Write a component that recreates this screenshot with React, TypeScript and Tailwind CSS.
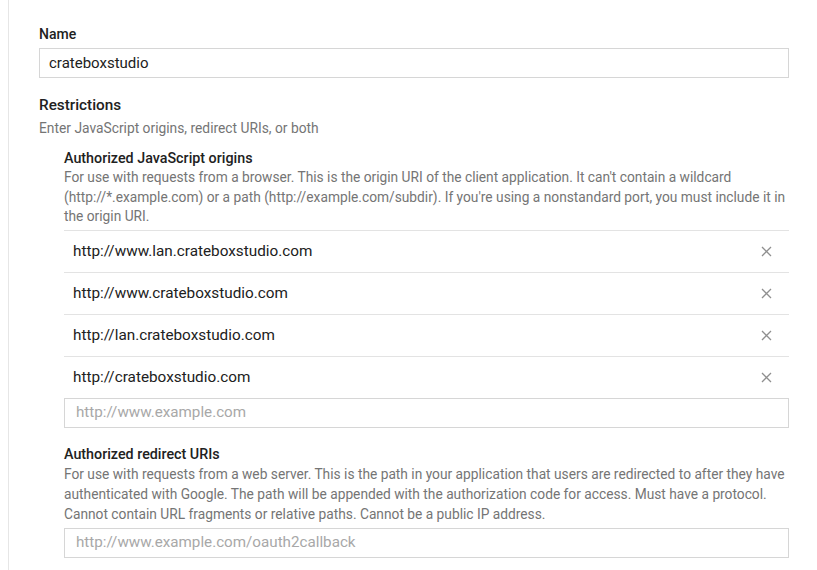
import React from "react";

const origins = [
  "http://www.lan.crateboxstudio.com",
  "http://www.crateboxstudio.com",
  "http://lan.crateboxstudio.com",
  "http://crateboxstudio.com",
];

function XIcon() {
  return (
    <svg width="11" height="11" viewBox="0 0 11 11" fill="none">
      <path d="M1 1 L10 10 M10 1 L1 10" stroke="#8f8f8f" strokeWidth="1.3" />
    </svg>
  );
}

export default function App() {
  return (
    <div
      className="w-[817px] h-[570px] bg-white overflow-hidden"
      style={{ fontFamily: "Roboto, 'Noto Sans', sans-serif" }}
    >
      <div className="ml-[8px] h-full border-l border-[#e6e6e6] pl-[30px] pr-[28px] pt-[24px]">
        <div className="text-[14px] leading-[20px] font-medium text-[#212121]">Name</div>
        <div className="mt-[4px] h-[30px] border border-[#d6d6d6] pl-[9px] flex items-center text-[15px] text-[#212121]">
          crateboxstudio
        </div>

        <div className="mt-[17px] text-[15.3px] leading-[20px] font-medium text-[#212121]">Restrictions</div>
        <div className="mt-[3px] text-[13.8px] leading-[20px] text-[#757575]">
          Enter JavaScript origins, redirect URIs, or both
        </div>

        <div className="pl-[25px]">
          <div className="mt-[10px] text-[14.3px] leading-[20px] font-medium text-[#212121]">
            Authorized JavaScript origins
          </div>
          <div className="text-[13.75px] leading-[19.5px] text-[#757575]">
            For use with requests from a browser. This is the origin URI of the client application. It can't contain a wildcard (http://*.example.com) or a path (http://example.com/subdir). If you're using a nonstandard port, you must include it in the origin URI.
          </div>
          <div className="mt-[3px]">
            {origins.map((o) => (
              <div
                key={o}
                className="h-[42px] border-t border-[#e3e3e3] pl-[9px] pr-[17px] flex items-center justify-between text-[15.3px] text-[#212121]"
              >
                <span>{o}</span>
                <XIcon />
              </div>
            ))}
          </div>
          <div className="h-[30px] border border-[#d6d6d6] pl-[11px] flex items-center text-[15.2px] text-[#a8a8a8]">
            http://www.example.com
          </div>

          <div className="mt-[16px] text-[14.3px] leading-[20px] font-medium text-[#212121]">
            Authorized redirect URIs
          </div>
          <div className="text-[13.75px] leading-[20px] text-[#757575]">
            For use with requests from a web server. This is the path in your application that users are redirected to after they have authenticated with Google. The path will be appended with the authorization code for access. Must have a protocol. Cannot contain URL fragments or relative paths. Cannot be a public IP address.
          </div>
          <div className="mt-[4px] h-[30px] border border-[#d6d6d6] pl-[11px] flex items-center text-[15.2px] text-[#a8a8a8]">
            http://www.example.com/oauth2callback
          </div>
        </div>
      </div>
    </div>
  );
}
